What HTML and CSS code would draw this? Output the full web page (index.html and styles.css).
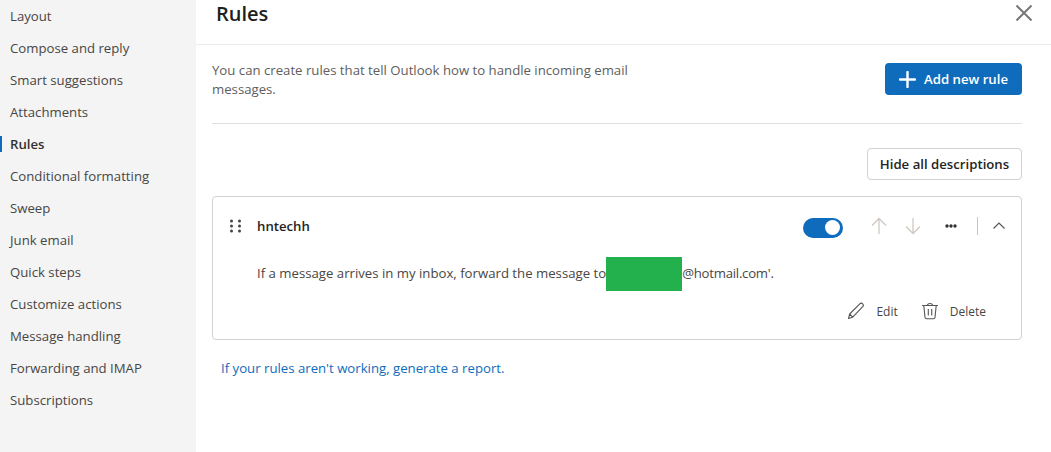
FILE: index.html
```html
<!DOCTYPE html>
<html lang="en">
<head>
  <meta charset="UTF-8" />
  <title>Rules</title>
  <link rel="stylesheet" href="styles.css">
</head>
<body>
  <nav class="sidebar">
    <a class="nav-item">Layout</a>
    <a class="nav-item">Compose and reply</a>
    <a class="nav-item">Smart suggestions</a>
    <a class="nav-item">Attachments</a>
    <a class="nav-item active">Rules</a>
    <a class="nav-item">Conditional formatting</a>
    <a class="nav-item">Sweep</a>
    <a class="nav-item">Junk email</a>
    <a class="nav-item">Quick steps</a>
    <a class="nav-item">Customize actions</a>
    <a class="nav-item">Message handling</a>
    <a class="nav-item">Forwarding and IMAP</a>
    <a class="nav-item">Subscriptions</a>
  </nav>

  <main class="main">
    <header class="panel-header">
      <h1 class="panel-title">Rules</h1>
      <svg class="close-icon" width="16" height="16" viewBox="0 0 16 16"><path d="M0.500 0.500l15 15M15.500 0.500l-15 15" fill="none" stroke="#777" stroke-width="2"/></svg>
    </header>

    <div class="content">
      <div class="intro">
        <p class="intro-text">You can create rules that tell Outlook how to handle incoming email messages.</p>
        <button class="btn-primary">
          <svg width="17" height="17" viewBox="0 0 17 17"><path d="M8.500 1v15M1 8.500h15" fill="none" stroke="#fff" stroke-width="2.400" stroke-linecap="round"/></svg>
          Add new rule
        </button>
      </div>

      <div class="toolbar">
        <button class="btn-outline">Hide all descriptions</button>
      </div>

      <section class="card">
        <div class="card-head">
          <svg class="grip" width="11" height="14" viewBox="0 0 11 14" fill="#444">
            <circle cx="1.500" cy="2" r="1.500"/><circle cx="9.500" cy="2" r="1.500"/>
            <circle cx="1.500" cy="7" r="1.500"/><circle cx="9.500" cy="7" r="1.500"/>
            <circle cx="1.500" cy="12" r="1.500"/><circle cx="9.500" cy="12" r="1.500"/>
          </svg>
          <span class="rule-name">hntechh</span>
          <div class="rule-controls">
            <span class="toggle"><span class="knob"></span></span>
            <svg class="arrow-up" width="16" height="18" viewBox="0 0 16 18"><path d="M8 17V1.500M1 8.500L8 1.500l7 7" fill="none" stroke="#cfc8c0" stroke-width="1.300"/></svg>
            <svg class="arrow-down" width="16" height="18" viewBox="0 0 16 18"><path d="M8 1v15.500M1 9.500l7 7 7-7" fill="none" stroke="#cfc8c0" stroke-width="1.300"/></svg>
            <svg class="more" width="12" height="4" viewBox="0 0 12 4" fill="#323130"><circle cx="2" cy="2" r="1.700"/><circle cx="6" cy="2" r="1.700"/><circle cx="10" cy="2" r="1.700"/></svg>
            <span class="sep"></span>
            <svg class="chevron" width="12" height="7" viewBox="0 0 12 7"><path d="M0.500 6.500L6 1l5.500 5.500" fill="none" stroke="#555" stroke-width="1.200"/></svg>
          </div>
        </div>
        <p class="rule-desc">If a message arrives in my inbox, forward the message to<span class="redacted"></span><span class="address">@hotmail.com'.</span></p>
        <div class="card-actions">
          <a class="action">
            <svg width="18" height="18" viewBox="0 0 18 18"><path d="M1.500 16.500l1.200-4.500L12.800 1.900a1.900 1.900 0 0 1 2.900 2.800L5.700 15.200z M2.700 12l3 3.200" fill="none" stroke="#555" stroke-width="1.100" stroke-linejoin="round"/></svg>
            Edit
          </a>
          <a class="action">
            <svg width="18" height="18" viewBox="0 0 18 18"><path d="M1 3.500h16M6.500 3.500C6.500 .8 11.500 .8 11.500 3.500M2.800 3.500l1.200 12a1.500 1.500 0 0 0 1.500 1.300h7a1.500 1.500 0 0 0 1.500-1.300l1.200-12M7.300 7v6.500M10.700 7v6.500" fill="none" stroke="#555" stroke-width="1.100"/></svg>
            Delete
          </a>
        </div>
      </section>

      <p class="report"><a href="#">If your rules aren't working, generate a report</a>.</p>
    </div>
  </main>
</body>
</html>
```

FILE: styles.css
```css
* {
  box-sizing: border-box;
}
html, body {
  height: 100%;
}
body {
  margin: 0;
  display: flex;
  overflow: hidden;
  background-color: #fff;
  color: #323130;
  font-family: "Open Sans", "Noto Sans", sans-serif;
  font-size: 13.2px;
}
.sidebar {
  width: 196px;
  flex: none;
  background-color: #f4f4f4;
}
.nav-item {
  display: flex;
  align-items: center;
  height: 32px;
  padding-left: 10px;
  color: #484644;
}
.nav-item.active {
  color: #323130;
  font-weight: 600;
  background: linear-gradient(#0f6cbd, #0f6cbd) 0 8px / 2px 16px no-repeat;
}
.main {
  flex: 1;
  min-width: 0;
}
.panel-header {
  display: flex;
  align-items: center;
  justify-content: space-between;
  height: 45px;
  padding: 0 19px 18px 20px;
  border-bottom: 1px solid #edebe9;
}
.panel-title {
  margin: 0;
  font-size: 20px;
  font-weight: 600;
  color: #201f1e;
}
.content {
  padding: 16px 29px 0 16px;
}
.intro {
  display: flex;
  justify-content: space-between;
  align-items: flex-start;
  padding-bottom: 24px;
  border-bottom: 1px solid #e1dfdd;
}
.intro-text {
  margin: 0;
  width: 460px;
  line-height: 19px;
  color: #605e5c;
}
.btn-primary {
  display: flex;
  align-items: center;
  justify-content: center;
  gap: 8px;
  width: 137px;
  height: 32px;
  margin-top: 2px;
  padding: 0;
  border: none;
  border-radius: 4px;
  background-color: #0f6cbd;
  color: #fff;
  font: 600 13.2px "Open Sans", sans-serif;
}
.toolbar {
  display: flex;
  justify-content: flex-end;
  margin: 24px 0 16px;
}
.btn-outline {
  width: 155px;
  height: 32px;
  padding: 0;
  border: 1px solid #d1d1d1;
  border-radius: 4px;
  background-color: #fff;
  color: #242424;
  font: 600 13.2px "Open Sans", sans-serif;
}
.card {
  height: 144px;
  padding: 0 15px 0 17px;
  border: 1px solid #d1d1d1;
  border-radius: 4px;
}
.card-head {
  display: flex;
  align-items: center;
  height: 57px;
}
.grip {
  margin-right: 16px;
}
.rule-name {
  font-weight: 600;
  color: #242424;
}
.rule-controls {
  display: flex;
  align-items: center;
  margin-left: auto;
}
.toggle {
  display: flex;
  align-items: center;
  justify-content: flex-end;
  width: 40px;
  height: 20px;
  margin: 4px 28px 0 0;
  padding-right: 3px;
  border-radius: 10px;
  background-color: #0f6cbd;
}
.knob {
  width: 15px;
  height: 15px;
  border-radius: 50%;
  background-color: #fff;
}
.arrow-up {
  margin-right: 18px;
}
.arrow-down {
  margin-right: 24px;
}
.sep {
  width: 1px;
  height: 18px;
  margin: 0 15px 0 20px;
  background-color: #c8c6c4;
}
.chevron {
  margin-right: 1px;
}
.rule-desc {
  height: 34px;
  margin: 2px 0 0;
  padding-left: 27px;
  line-height: 34px;
  color: #484644;
}
.redacted {
  display: inline-block;
  width: 76px;
  height: 34px;
  margin-top: 1px;
  vertical-align: top;
  background-color: #22b14c;
}
.address {
  letter-spacing: -0.25px;
}
.card-actions {
  display: flex;
  justify-content: flex-end;
  gap: 23px;
  margin-top: 12px;
  padding-right: 20px;
}
.action {
  display: flex;
  align-items: center;
  gap: 11px;
  font-size: 12px;
  color: #484644;
}
.report {
  margin: 19px 0 0 9px;
  color: #0f6cbd;
}
.report a {
  color: #0f6cbd;
  text-decoration: none;
}
```
